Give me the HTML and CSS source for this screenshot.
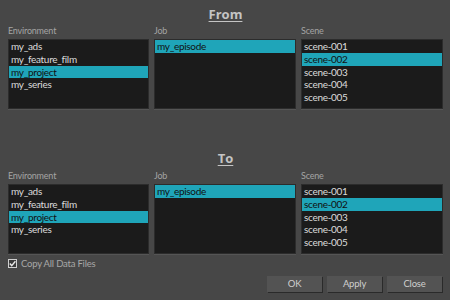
FILE: index.html
```html
<!DOCTYPE html>
<html>
<head>
<meta charset="utf-8">
<link rel="stylesheet" href="styles.css">
</head>
<body>
<div class="dialog">
  <section class="group group-from">
    <h2 class="title">From</h2>
    <div class="columns">
      <div class="col">
        <div class="label">Environment</div>
        <ul class="list">
          <li>my_ads</li>
          <li>my_feature_film</li>
          <li class="sel">my_project</li>
          <li>my_series</li>
        </ul>
      </div>
      <div class="col">
        <div class="label">Job</div>
        <ul class="list">
          <li class="sel">my_episode</li>
        </ul>
      </div>
      <div class="col">
        <div class="label">Scene</div>
        <ul class="list">
          <li>scene-001</li>
          <li class="sel">scene-002</li>
          <li>scene-003</li>
          <li>scene-004</li>
          <li>scene-005</li>
        </ul>
      </div>
    </div>
  </section>
  <section class="group group-to">
    <h2 class="title">To</h2>
    <div class="columns">
      <div class="col">
        <div class="label">Environment</div>
        <ul class="list">
          <li>my_ads</li>
          <li>my_feature_film</li>
          <li class="sel">my_project</li>
          <li>my_series</li>
        </ul>
      </div>
      <div class="col">
        <div class="label">Job</div>
        <ul class="list">
          <li class="sel">my_episode</li>
        </ul>
      </div>
      <div class="col">
        <div class="label">Scene</div>
        <ul class="list">
          <li>scene-001</li>
          <li class="sel">scene-002</li>
          <li>scene-003</li>
          <li>scene-004</li>
          <li>scene-005</li>
        </ul>
      </div>
    </div>
  </section>
  <label class="check">
    <span class="box"><svg width="9" height="9" viewBox="0 0 9 9"><path d="M1.8 4.6 L3.7 6.6 L7.4 2.2" fill="none" stroke="#e8e8e8" stroke-width="1.4"/></svg></span>
    <span class="check-text">Copy All Data Files</span>
  </label>
  <div class="buttons">
    <button class="btn">OK</button>
    <button class="btn">Apply</button>
    <button class="btn">Close</button>
  </div>
</div>
</body>
</html>
```

FILE: styles.css
```css
* { box-sizing: border-box; }
html, body {
  margin: 0;
  padding: 0;
  background: #474747;
  width: 450px;
  height: 300px;
  overflow: hidden;
}
.dialog {
  padding: 0 7px 0 8px;
  font-family: Lato, "Open Sans", sans-serif;
  font-size: 10px;
  color: #d8d8d8;
}
.group { height: 143px; }
.group-to { height: 110px; }
.title {
  margin: 0;
  padding-top: 5px;
  height: 24px;
  text-align: center;
  font-family: "Open Sans", sans-serif;
  font-size: 13px;
  line-height: 18px;
  font-weight: bold;
  color: #c4c4c4;
  text-decoration: underline;
  text-underline-offset: 2px;
}
.group-to .title { padding-top: 6px; height: 26px; }
.columns {
  display: grid;
  grid-template-columns: 141px 142px 142px;
  column-gap: 5px;
}
.label {
  height: 13px;
  line-height: 13px;
  margin-bottom: 2px;
  color: #a4a4a4;
  font-size: 9px;
  letter-spacing: -0.2px;
}
.list {
  list-style: none;
  margin: 0;
  padding: 0;
  height: 70px;
  background: #1b1b1b;
  border: 1px solid #2c2c2c;
  box-shadow: 0 1px 0 #555;
}
.list li {
  height: 12.8px;
  line-height: 12.8px;
  padding-left: 2px;
  font-size: 10px;
  letter-spacing: -0.3px;
  color: #dcdcdc;
  white-space: nowrap;
}
.list li.sel {
  background: #1fa5b9;
  color: #111;
}
.check {
  display: flex;
  align-items: center;
  gap: 4px;
  height: 14px;
  margin-top: 3px;
}
.box {
  width: 9px;
  height: 9px;
  border: 1px solid #d0d0d0;
  background: #3a3a3a;
  display: flex;
  position: relative;
}
.box svg { position: absolute; left: -1px; top: -1px; }
.check-text { color: #a8a8a8; font-size: 9.5px; letter-spacing: -0.2px; }
.buttons {
  display: flex;
  justify-content: flex-end;
  gap: 5px;
  margin-top: 6px;
  padding-right: 1px;
}
.btn {
  width: 55px;
  height: 16px;
  padding: 0;
  border: none;
  background: #535353;
  color: #cfcfcf;
  font-family: Lato, "Open Sans", sans-serif;
  font-size: 9.5px;
  letter-spacing: -0.2px;
  line-height: 16px;
  box-shadow: 1px 1px 0 #2a2a2a;
}
```
